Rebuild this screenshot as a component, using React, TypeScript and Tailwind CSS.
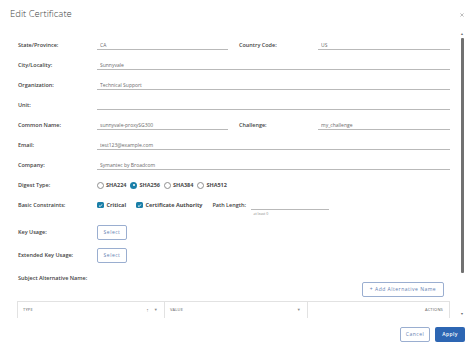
import React from "react";

const fieldCls =
  "h-[10px] border-b border-[#b9b9b9] bg-transparent px-[3px] text-[5px] text-[#6b6b6b] outline-none";

function Label({ children, w = "w-[79px]" }: { children: React.ReactNode; w?: string }) {
  return <div className={`${w} shrink-0 text-[5.5px] font-semibold text-[#3f3f3f]`}>{children}</div>;
}

function Row({ children }: { children: React.ReactNode }) {
  return <div className="flex h-[20px] items-center">{children}</div>;
}

function Radio({ checked, label }: { checked?: boolean; label: string }) {
  return (
    <div className="flex items-center gap-[2px]">
      {checked ? (
        <span className="flex h-[7px] w-[7px] items-center justify-center rounded-full bg-[#1a7fa8]">
          <span className="h-[2.5px] w-[2.5px] rounded-full bg-white" />
        </span>
      ) : (
        <span className="h-[7px] w-[7px] rounded-full border-[0.8px] border-[#8f8f8f] bg-white" />
      )}
      <span className="text-[5.5px] font-bold text-[#4a4a4a]">{label}</span>
    </div>
  );
}

function Check({ label }: { label: string }) {
  return (
    <div className="flex items-center gap-[3px]">
      <span className="flex h-[6.5px] w-[6.5px] items-center justify-center rounded-[1.5px] bg-[#1a7fa8]">
        <svg viewBox="0 0 10 10" className="h-[5px] w-[5px]">
          <path d="M2 5.2 L4.2 7.3 L8 2.8" fill="none" stroke="white" strokeWidth="1.8" />
        </svg>
      </span>
      <span className="text-[5.5px] font-bold text-[#4a4a4a]">{label}</span>
    </div>
  );
}

function OutlineBtn({ children, cls }: { children: React.ReactNode; cls: string }) {
  return (
    <button
      className={`${cls} flex items-center justify-center rounded-[2px] border border-[#9aaed0] bg-white text-[5px] tracking-[0.5px] text-[#5f7eb0]`}
    >
      {children}
    </button>
  );
}

export default function App() {
  return (
    <div className="flex h-[351px] w-[474px] flex-col overflow-hidden bg-white font-['Open_Sans',sans-serif]">
      {/* Header */}
      <div className="flex h-[31px] shrink-0 items-start justify-between pl-[10px] pr-[10px] pt-[7px]">
        <h1 className="text-[9.5px] font-light leading-[13px] text-[#454545]">Edit Certificate</h1>
        <svg viewBox="0 0 10 10" className="mt-[6px] h-[4px] w-[4px]">
          <path d="M1 1 L9 9 M9 1 L1 9" stroke="#8a8a8a" strokeWidth="1.4" />
        </svg>
      </div>

      {/* Body */}
      <div className="flex min-h-0 flex-1">
        <div className="w-[450px] shrink-0 overflow-hidden pl-[18px] pt-[4px]">
          <Row>
            <Label>State/Province:</Label>
            <input readOnly defaultValue="CA" className={`${fieldCls} w-[131px]`} />
            <Label w="w-[79px] ml-[11px]">Country Code:</Label>
            <input readOnly defaultValue="US" className={`${fieldCls} w-[132px]`} />
          </Row>
          <Row>
            <Label>City/Locality:</Label>
            <input readOnly defaultValue="Sunnyvale" className={`${fieldCls} flex-1`} />
          </Row>
          <Row>
            <Label>Organization:</Label>
            <input readOnly defaultValue="Technical Support" className={`${fieldCls} flex-1`} />
          </Row>
          <Row>
            <Label>Unit:</Label>
            <input readOnly defaultValue="" className={`${fieldCls} flex-1`} />
          </Row>
          <Row>
            <Label>Common Name:</Label>
            <input readOnly defaultValue="sunnyvale-proxySG300" className={`${fieldCls} w-[131px]`} />
            <Label w="w-[79px] ml-[11px]">Challenge:</Label>
            <input readOnly defaultValue="my_challenge" className={`${fieldCls} w-[132px]`} />
          </Row>
          <Row>
            <Label>Email:</Label>
            <input readOnly defaultValue="test123@example.com" className={`${fieldCls} flex-1`} />
          </Row>
          <Row>
            <Label>Company:</Label>
            <input readOnly defaultValue="Symantec by Broadcom" className={`${fieldCls} flex-1`} />
          </Row>
          <Row>
            <Label>Digest Type:</Label>
            <div className="flex items-center gap-[4px]">
              <Radio label="SHA224" />
              <Radio checked label="SHA256" />
              <Radio label="SHA384" />
              <Radio label="SHA512" />
            </div>
          </Row>
          <Row>
            <Label>Basic Constraints:</Label>
            <div className="flex items-center gap-[10px]">
              <Check label="Critical" />
              <Check label="Certificate Authority" />
            </div>
            <div className="ml-[10px] w-[39px] shrink-0 text-[5.5px] font-semibold text-[#3f3f3f]">Path Length:</div>
            <div className="flex flex-col pt-[5px]">
              <input readOnly defaultValue="" className={`${fieldCls} w-[78px]`} />
              <span className="mt-[1px] pl-[2px] text-[3.5px] leading-[5px] text-[#8a8a8a]">at least 0</span>
            </div>
          </Row>
          <div className="mt-[10px] flex h-[15px] items-center">
            <Label>Key Usage:</Label>
            <OutlineBtn cls="h-[15px] w-[30px]">Select</OutlineBtn>
          </div>
          <div className="mt-[8px] flex h-[15px] items-center">
            <Label>Extended Key Usage:</Label>
            <OutlineBtn cls="h-[15px] w-[30px]">Select</OutlineBtn>
          </div>
          <div className="mt-[11px] flex h-[8px] items-center">
            <div className="text-[5.5px] font-semibold text-[#3f3f3f]">Subject Alternative Name:</div>
          </div>
          <div className="flex justify-end pr-[6px]">
            <OutlineBtn cls="h-[15px] w-[82px]">+ Add Alternative Name</OutlineBtn>
          </div>

          {/* Table */}
          <div className="ml-[-1px] mt-[4px] border-x border-t border-[#e2e2e2]">
            <div className="flex h-[16px] items-center text-[4px] uppercase tracking-[0.2px] text-[#5a5a5a]">
              <div className="flex h-full w-[147px] items-center justify-between border-r border-[#e2e2e2] pl-[5px] pr-[6px]">
                <span>Type</span>
                <span className="flex items-center gap-[5px] text-[#8a8a8a]">
                  <span className="text-[5px] leading-none">↑</span>
                  <span className="text-[4px] leading-none">▼</span>
                </span>
              </div>
              <div className="flex h-full w-[143px] items-center justify-between border-r border-[#e2e2e2] pl-[5px] pr-[6px]">
                <span>Value</span>
                <span className="text-[4px] leading-none text-[#8a8a8a]">▼</span>
              </div>
              <div className="flex h-full flex-1 items-center justify-end pr-[6px]">
                <span>Actions</span>
              </div>
            </div>
          </div>
        </div>

        {/* Scrollbar */}
        <div className="ml-[10px] flex w-[4px] flex-col items-center pt-[1px] pb-[3px]">
          <span className="text-[3.5px] leading-[3px] text-[#6d6d6d]">▲</span>
          <div className="mt-[3px] h-[235px] w-[3px] rounded-[1px] bg-[#717171]" />
          <div className="flex-1" />
          <span className="text-[3.5px] leading-[3px] text-[#6d6d6d]">▼</span>
        </div>
      </div>

      {/* Footer */}
      <div className="flex h-[33px] shrink-0 items-start justify-end gap-[5px] pr-[9px] pt-[9px]">
        <OutlineBtn cls="h-[15px] w-[30px]">Cancel</OutlineBtn>
        <button className="flex h-[15px] w-[30px] items-center justify-center rounded-[2px] bg-[#2d66b3] text-[5px] font-semibold tracking-[0.4px] text-white">
          Apply
        </button>
      </div>
    </div>
  );
}
